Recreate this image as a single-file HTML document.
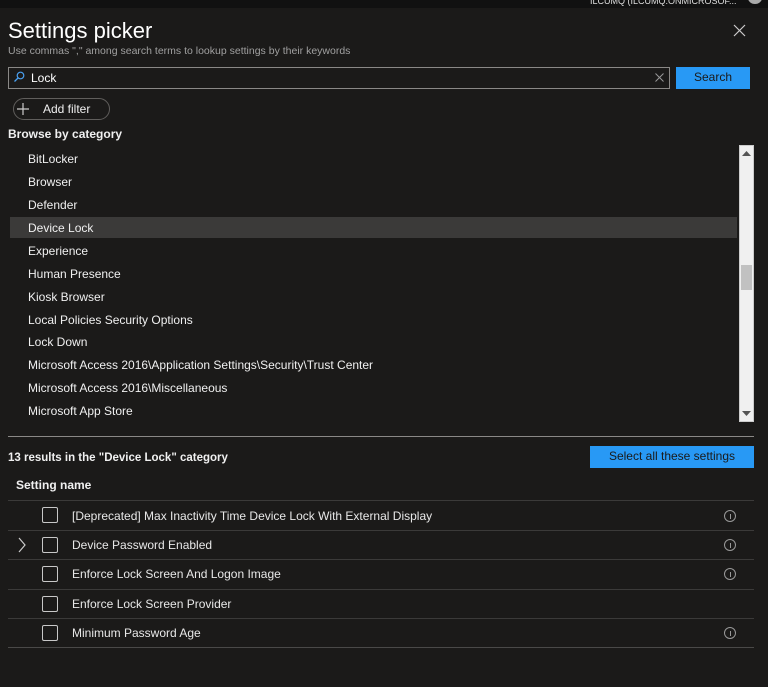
<!DOCTYPE html>
<html><head><meta charset="utf-8"><style>
*{margin:0;padding:0;box-sizing:border-box}
body{width:768px;height:687px;background:#1b1a19;font-family:"Liberation Sans",sans-serif;color:#e8e8e8;position:relative;overflow:hidden}
.a{position:absolute;white-space:nowrap}
.cat{position:absolute;left:28px;font-size:12px;color:#f0f0f0}
.line{position:absolute;left:8px;width:746px;height:1px;background:#3b3a39}
.cb{position:absolute;left:42px;width:16px;height:16px;border:1px solid #c8c8c8;border-radius:2px}
.rt{position:absolute;left:72px;font-size:12px;color:#e8e8e8}
.info{position:absolute;left:724px;width:12px;height:12px;border:1px solid #999;border-radius:50%}
.info:after{content:"";position:absolute;left:4.5px;top:3px;width:1px;height:5px;background:#999}
</style></head><body>
<div class="a" style="left:0;top:0;width:768px;height:8px;background:#111"></div>
<div class="a" style="left:590px;top:-4px;font-size:9px;color:#ddd">ILCUMQ (ILCUMQ.ONMICROSOF...</div>
<div class="a" style="left:748px;top:-8px;width:14px;height:12px;border-radius:50%;background:#aaa"></div>
<div class="a" style="left:8px;top:18px;font-size:22px;color:#fff">Settings picker</div>
<svg class="a" style="left:733px;top:24px" width="13" height="13"><path d="M1 1L12 12M12 1L1 12" stroke="#ccc" stroke-width="1.2"/></svg>
<div class="a" style="left:8px;top:45px;font-size:10.5px;color:#a0a0a0">Use commas "," among search terms to lookup settings by their keywords</div>
<div class="a" style="left:8px;top:67px;width:662px;height:22px;border:1px solid #8a8886;background:#1b1a19"></div>
<svg class="a" style="left:13px;top:71px" width="12" height="12"><circle cx="7.5" cy="4.5" r="3.3" fill="none" stroke="#4aa0f0" stroke-width="1.2"/><path d="M5 7L1.5 10.5" stroke="#4aa0f0" stroke-width="1.3"/></svg>
<div class="a" style="left:31px;top:71px;font-size:12px;color:#fff">Lock</div>
<svg class="a" style="left:655px;top:73px" width="9" height="9"><path d="M0.5 0.5L8.5 8.5M8.5 0.5L0.5 8.5" stroke="#999" stroke-width="1"/></svg>
<div class="a" style="left:676px;top:67px;width:74px;height:22px;background:#2899f5;font-size:12px;color:#1b1a19;text-align:center;line-height:21px">Search</div>
<div class="a" style="left:13px;top:98px;width:97px;height:22px;border:1px solid #605e5c;border-radius:11px"></div>
<svg class="a" style="left:16px;top:102px" width="14" height="14"><path d="M7 1V13M1 7H13" stroke="#ccc" stroke-width="1.2"/></svg>
<div class="a" style="left:43px;top:102px;font-size:12px;color:#f0f0f0">Add filter</div>
<div class="a" style="left:8px;top:127px;font-size:12px;font-weight:bold;color:#f0f0f0">Browse by category</div>
<div class="a" style="left:10px;top:217px;width:727px;height:21px;background:#3b3a39"></div>
<div class="cat" style="top:152px">BitLocker</div>
<div class="cat" style="top:175px">Browser</div>
<div class="cat" style="top:198px">Defender</div>
<div class="cat" style="top:221px">Device Lock</div>
<div class="cat" style="top:244px">Experience</div>
<div class="cat" style="top:267px">Human Presence</div>
<div class="cat" style="top:290px">Kiosk Browser</div>
<div class="cat" style="top:313px">Local Policies Security Options</div>
<div class="cat" style="top:335px">Lock Down</div>
<div class="cat" style="top:358px">Microsoft Access 2016\Application Settings\Security\Trust Center</div>
<div class="cat" style="top:381px">Microsoft Access 2016\Miscellaneous</div>
<div class="cat" style="top:404px">Microsoft App Store</div>
<div class="a" style="left:739px;top:145px;width:15px;height:277px;background:#f0f0f0;border:1px solid #ccc"></div>
<div class="a" style="left:741px;top:265px;width:11px;height:25px;background:#c1c1c1"></div>
<svg class="a" style="left:742px;top:151px" width="9" height="5"><path d="M4.5 0L9 5H0Z" fill="#555"/></svg>
<svg class="a" style="left:742px;top:411px" width="9" height="5"><path d="M0 0H9L4.5 5Z" fill="#555"/></svg>
<div class="a" style="left:8px;top:436px;width:746px;height:1px;background:#8a8886"></div>
<div class="a" style="left:8px;top:452px;font-size:11.5px;font-weight:bold;color:#f0f0f0">13 results in the "Device Lock" category</div>
<div class="a" style="left:590px;top:446px;width:164px;height:22px;background:#2899f5;font-size:12px;color:#1b1a19;text-align:center;line-height:21px">Select all these settings</div>
<div class="a" style="left:16px;top:478px;font-size:12px;font-weight:bold;color:#f0f0f0">Setting name</div>
<div class="line" style="top:500px"></div>
<div class="cb" style="top:507px"></div><div class="rt" style="top:509px">[Deprecated] Max Inactivity Time Device Lock With External Display</div><div class="info" style="top:510px"></div>
<div class="line" style="top:530px"></div>
<svg class="a" style="left:18px;top:537px" width="8" height="16"><path d="M1 1L7 8L1 15" fill="none" stroke="#ccc" stroke-width="1.2"/></svg>
<div class="cb" style="top:537px"></div><div class="rt" style="top:538px">Device Password Enabled</div><div class="info" style="top:539px"></div>
<div class="line" style="top:559px"></div>
<div class="cb" style="top:566px"></div><div class="rt" style="top:567px">Enforce Lock Screen And Logon Image</div><div class="info" style="top:568px"></div>
<div class="line" style="top:589px"></div>
<div class="cb" style="top:596px"></div><div class="rt" style="top:597px">Enforce Lock Screen Provider</div>
<div class="line" style="top:618px"></div>
<div class="cb" style="top:625px"></div><div class="rt" style="top:626px">Minimum Password Age</div><div class="info" style="top:627px"></div>
<div class="line" style="top:647px;background:#4a4948"></div>
</body></html>
